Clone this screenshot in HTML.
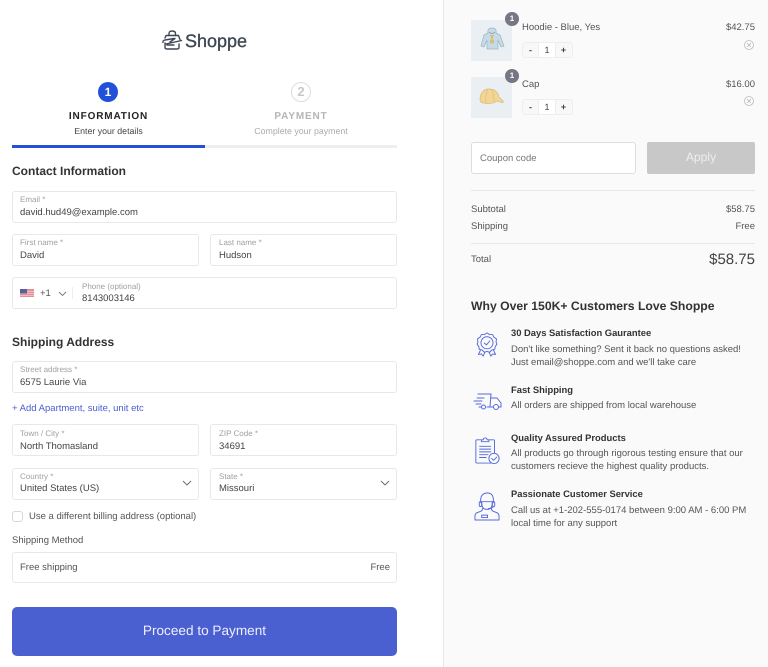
<!DOCTYPE html>
<html><head><meta charset="utf-8"><style>
html,body{margin:0;padding:0;background:#fff}
#p{position:relative;width:768px;height:667px;overflow:hidden;background:#fff;font-family:"Liberation Sans",sans-serif;color:#444;text-rendering:geometricPrecision;filter:blur(.3px)}
#r{position:absolute;left:443px;top:0;width:325px;height:667px;background:#fafafa;border-left:1px solid #e8e8e8;box-sizing:border-box}
.t{position:absolute;white-space:nowrap;line-height:14px}
.b{position:absolute;box-sizing:border-box;border:1px solid #e8e8e8;border-radius:3px;background:#fff}
.l{font-size:8px;color:#a0a0a0;margin-top:1px}
.v{font-size:9.5px;color:#444;margin-top:1px}
.h{font-size:12px;font-weight:bold;color:#333}
.s{font-size:9.5px;color:#555;margin-top:1px}
.f{font-size:9.4px;font-weight:bold;color:#333}
.q{position:absolute;left:522px;width:51px;height:16px;box-sizing:border-box;border:1px solid #eee;border-radius:3px;background:#f8f8f8}
.q i{position:absolute;left:15px;top:0;height:14px;width:16px;background:#fff;border-left:1px solid #eee;border-right:1px solid #eee;font:normal 9px/14px "Liberation Sans",sans-serif;text-align:center;color:#444}
.q b{position:absolute;top:0;width:15px;font:bold 9px/14px "Liberation Sans",sans-serif;text-align:center;color:#444}
.img{position:absolute;left:471px;width:41px;height:41px;background:#e9eff3}
.bd{position:absolute;left:505px;width:14px;height:14px;border-radius:50%;background:#767684;color:#fff;font:bold 8px/14px "Liberation Sans",sans-serif;text-align:center}
svg{position:absolute;overflow:visible}
</style></head><body><div id="p">
<div id="r"></div>

<svg style="left:162px;top:30px" width="21" height="20" viewBox="0 0 21 20" fill="none" stroke="#3d4753" stroke-width="1.4" stroke-linecap="round" stroke-linejoin="round"><path d="M3 8 L4 5.5 H16.5 L18 9.5 M3 13 V17.5 Q3 19 5 19 H15 Q17 19 17 17.5 V14"/><path d="M7 5.5 V3.5 Q7 1 10 1 Q13.5 1 13.5 3.5 V5.5"/><path d="M1 12.5 Q0.5 10.5 3 10 L12 8.5 M4 14 L19.5 10.5 M8 12 L13 8.5 M5 15 H12"/></svg>
<div class="t" style="left:185px;top:30px;line-height:23px;font-size:18px;color:#3d4753;-webkit-text-stroke:.35px #3d4753">Shoppe</div>

<div style="position:absolute;left:98px;top:82px;width:20px;height:20px;border-radius:50%;background:#2350d9;color:#fff;font:bold 12px/20px 'Liberation Sans',sans-serif;text-align:center">1</div>
<div style="position:absolute;left:291px;top:82px;width:20px;height:20px;box-sizing:border-box;border:1px solid #ddd;border-radius:50%;background:#fff;color:#c8c8c8;font:bold 13px/18px 'Liberation Sans',sans-serif;text-align:center">2</div>
<div class="t" style="left:12px;width:193px;top:108px;margin-top:1.5px;text-align:center;font-size:10px;font-weight:bold;color:#222;letter-spacing:.85px">INFORMATION</div>
<div class="t" style="left:205px;width:192px;top:108px;margin-top:1.5px;text-align:center;font-size:10px;font-weight:bold;color:#b5b5b5;letter-spacing:.85px">PAYMENT</div>
<div class="t" style="left:12px;width:193px;top:124px;text-align:center;font-size:8.8px;color:#444">Enter your details</div>
<div class="t" style="left:205px;width:192px;top:124px;text-align:center;font-size:8.8px;color:#aaa">Complete your payment</div>
<div style="position:absolute;left:12px;top:145px;width:193px;height:3px;background:#2350d9"></div>
<div style="position:absolute;left:205px;top:145px;width:192px;height:3px;background:#eee"></div>

<div class="t h" style="left:12px;top:164px">Contact Information</div>
<div class="b" style="left:12px;top:191px;width:385px;height:32px"></div>
<div class="t l" style="left:20px;top:192px">Email *</div><div class="t v" style="left:20px;top:205px">david.hud49@example.com</div>
<div class="b" style="left:12px;top:234px;width:187px;height:32px"></div>
<div class="t l" style="left:20px;top:235px">First name *</div><div class="t v" style="left:20px;top:248px">David</div>
<div class="b" style="left:210px;top:234px;width:187px;height:32px"></div>
<div class="t l" style="left:219px;top:235px">Last name *</div><div class="t v" style="left:219px;top:248px">Hudson</div>
<div class="b" style="left:12px;top:277px;width:385px;height:32px"></div>
<svg style="left:20px;top:289px" width="14" height="8" viewBox="0 0 14 8"><rect width="14" height="8" fill="#e38f99"/><rect y="2" width="14" height="1" fill="#eebcc2"/><rect y="4" width="14" height="1" fill="#eebcc2"/><rect y="6" width="14" height="1" fill="#eebcc2"/><rect width="7" height="4.5" fill="#5b5f95"/></svg>
<div class="t s" style="left:40px;top:286px">+1</div>
<svg style="left:58px;top:291px" width="9" height="6" viewBox="0 0 9 6" fill="none" stroke="#777" stroke-width=".9"><path d="M1 1 L4.5 4.5 L8 1"/></svg>
<div style="position:absolute;left:72px;top:287px;width:1px;height:12px;background:#eee"></div>
<div class="t l" style="left:82px;top:279px">Phone (optional)</div><div class="t v" style="left:82px;top:291px">8143003146</div>

<div class="t h" style="left:12px;top:335px">Shipping Address</div>
<div class="b" style="left:12px;top:361px;width:385px;height:32px"></div>
<div class="t l" style="left:20px;top:362px">Street address *</div><div class="t v" style="left:20px;top:375px">6575 Laurie Via</div>
<div class="t s" style="left:12px;top:401px;color:#4a5fd0">+ Add Apartment, suite, unit etc</div>
<div class="b" style="left:12px;top:424px;width:187px;height:32px"></div>
<div class="t l" style="left:20px;top:426px">Town / City *</div><div class="t v" style="left:20px;top:439px">North Thomasland</div>
<div class="b" style="left:210px;top:424px;width:187px;height:32px"></div>
<div class="t l" style="left:219px;top:426px">ZIP Code *</div><div class="t v" style="left:219px;top:439px">34691</div>
<div class="b" style="left:12px;top:468px;width:187px;height:32px"></div>
<div class="t l" style="left:20px;top:469px">Country *</div><div class="t v" style="left:20px;top:481px">United States (US)</div>
<svg style="left:182px;top:480px" width="10" height="7" viewBox="0 0 10 7" fill="none" stroke="#666" stroke-width=".9"><path d="M1 1 L5 5 L9 1"/></svg>
<div class="b" style="left:210px;top:468px;width:187px;height:32px"></div>
<div class="t l" style="left:219px;top:469px">State *</div><div class="t v" style="left:219px;top:481px">Missouri</div>
<svg style="left:380px;top:480px" width="10" height="7" viewBox="0 0 10 7" fill="none" stroke="#666" stroke-width=".9"><path d="M1 1 L5 5 L9 1"/></svg>

<div class="b" style="left:12px;top:511px;width:11px;height:11px;border-color:#d8d8d8"></div>
<div class="t s" style="left:29px;top:509px">Use a different billing address (optional)</div>
<div class="t s" style="left:12px;top:533px">Shipping Method</div>
<div class="b" style="left:12px;top:552px;width:385px;height:31px"></div>
<div class="t s" style="left:20px;top:560px">Free shipping</div>
<div class="t s" style="right:378px;top:560px">Free</div>
<div style="position:absolute;left:12px;top:607px;width:385px;height:49px;background:#4a5fd0;border-radius:5px;color:#eef;font-size:13.6px;line-height:48px;text-align:center">Proceed to Payment</div>

<!-- cart -->
<div class="img" style="top:20px"></div>
<svg style="left:471px;top:20px" width="41" height="41" viewBox="0 0 41 41"><path d="M17 13 Q16 8 21 8 Q26 8 25 13 L29 15 L33 26 L30 27 L27 20 V29 H16 V20 L13 27 L10 26 L13 15 Z" fill="#c6dbe5" stroke="#9ab5c2" stroke-width=".7"/><path d="M18 12 Q21 15 24 12" stroke="#7d99a8" fill="none" stroke-width=".8"/><path d="M19.5 15 L21 19 L22.5 15 M19.5 20 H22.5 V23 H19.5 Z" stroke="#d8ac60" fill="#e4c27c" stroke-width=".6"/></svg>
<div class="bd" style="top:12px">1</div>
<div class="t s" style="left:522px;top:20px">Hoodie - Blue, Yes</div>
<div class="q" style="top:42px"><b style="left:0">-</b><i>1</i><b style="left:33px">+</b></div>
<div class="t s" style="right:13px;top:20px">$42.75</div>
<svg style="left:744px;top:40px" width="10" height="10" viewBox="0 0 10 10" fill="none" stroke="#bbb" stroke-width=".8"><circle cx="5" cy="5" r="4.5"/><path d="M3.2 3.2 L6.8 6.8 M6.8 3.2 L3.2 6.8"/></svg>

<div class="img" style="top:77px"></div>
<svg style="left:471px;top:77px" width="41" height="41" viewBox="0 0 41 41"><path d="M9 22 Q10 12 18 12 Q26 12 28 20 L32 24 Q33 26 31 25.5 L26 24 Q20 28 13 26 Q9 26 9 22 Z" fill="#f3d596" stroke="#dcb878" stroke-width=".7"/><path d="M17 12 Q14 18 15 26 M21 13 Q23 18 23 26" stroke="#dcb878" fill="none" stroke-width=".6"/></svg>
<div class="bd" style="top:69px">1</div>
<div class="t s" style="left:522px;top:77px">Cap</div>
<div class="q" style="top:99px"><b style="left:0">-</b><i>1</i><b style="left:33px">+</b></div>
<div class="t s" style="right:13px;top:77px">$16.00</div>
<svg style="left:744px;top:96px" width="10" height="10" viewBox="0 0 10 10" fill="none" stroke="#bbb" stroke-width=".8"><circle cx="5" cy="5" r="4.5"/><path d="M3.2 3.2 L6.8 6.8 M6.8 3.2 L3.2 6.8"/></svg>

<div class="b" style="left:471px;top:142px;width:165px;height:32px;border-color:#ddd"></div>
<div class="t s" style="left:480px;top:151px;color:#777">Coupon code</div>
<div style="position:absolute;left:647px;top:142px;width:108px;height:32px;background:#c8c8c8;border-radius:2px;color:#eee;font-size:12.1px;line-height:31px;text-align:center">Apply</div>
<div style="position:absolute;left:471px;top:190px;width:284px;height:1px;background:#e8e8e8"></div>
<div class="t s" style="left:471px;top:202px">Subtotal</div><div class="t s" style="right:13px;top:202px">$58.75</div>
<div class="t s" style="left:471px;top:219px">Shipping</div><div class="t s" style="right:13px;top:219px">Free</div>
<div style="position:absolute;left:471px;top:243px;width:284px;height:1px;background:#e8e8e8"></div>
<div class="t s" style="left:471px;top:252px">Total</div>
<div class="t" style="right:13px;top:252px;margin-top:1px;font-size:15px;color:#444">$58.75</div>

<div class="t" style="left:471px;top:299px;font-size:12.2px;font-weight:bold;color:#333">Why Over 150K+ Customers Love Shoppe</div>

<svg style="left:476px;top:332px" width="22" height="25" viewBox="0 0 25 29" fill="none" stroke="#5468dc" stroke-width="1.1" stroke-linejoin="round"><path d="M12.5 1 L15.5 3 L19 3 L20.5 6 L23.5 8 L23 11.5 L24 14 L22 17 L21.5 20 L18 21 L15.5 23.5 L12.5 22.5 L9.5 23.5 L7 21 L3.5 20 L3 17 L1 14 L2 11.5 L1.5 8 L4.5 6 L6 3 L9.5 3 Z"/><circle cx="12.5" cy="12.5" r="7"/><path d="M9 12.5 L11.8 15 L16 10"/><path d="M5 21 L2.5 26 L6 25.5 L8 28 L10 23.5 M20 21 L22.5 26 L19 25.5 L17 28 L15 23.5"/></svg>
<div class="t f" style="left:511px;top:326px">30 Days Satisfaction Gaurantee</div>
<div class="t s" style="left:511px;top:342px">Don't like something? Sent it back no questions asked!</div>
<div class="t s" style="left:511px;top:355px">Just email@shoppe.com and we'll take care</div>

<svg style="left:473px;top:393px" width="30" height="17" viewBox="0 0 30 17" fill="none" stroke="#5468dc" stroke-width="1" stroke-linecap="round" stroke-linejoin="round"><path d="M5 1 H18 L17 14 H14 M8 14 H6 M4 5 H11 M1 8 H9 M3 11 H8"/><path d="M18 5 H24 L28 10 V14 H25.5 M20 14 H17"/><circle cx="10.5" cy="14" r="2"/><circle cx="23" cy="14" r="2.5"/></svg>
<div class="t f" style="left:511px;top:383px">Fast Shipping</div>
<div class="t s" style="left:511px;top:398px">All orders are shipped from local warehouse</div>

<svg style="left:474px;top:437px" width="27" height="27" viewBox="0 0 27 29" fill="none" stroke="#5468dc" stroke-width="1" stroke-linecap="round" stroke-linejoin="round"><path d="M7 3 H2 Q1 3 1 4 V27 Q1 28 2 28 H17 M21 17 V4 Q21 3 20 3 H15"/><path d="M7 5 V3 H9 Q9 1 11 1 Q13 1 13 3 H15 V5 Z"/><path d="M5 10 H17 M5 13 H17 M5 16 H17 M5 19 H14 M5 22 H12"/><circle cx="20.5" cy="23" r="5.5"/><path d="M18 23 L20 25 L23.5 21.5"/></svg>
<div class="t f" style="left:511px;top:431px">Quality Assured Products</div>
<div class="t s" style="left:511px;top:446px">All products go through rigorous testing ensure that our</div>
<div class="t s" style="left:511px;top:459px">customers recieve the highest quality products.</div>

<svg style="left:474px;top:492px" width="26" height="29" viewBox="0 0 27 30" fill="none" stroke="#5468dc" stroke-width="1" stroke-linecap="round" stroke-linejoin="round"><path d="M7 11 Q6 1 14 1 Q21 1 20 11"/><path d="M7 10 H20 M8 11 Q8 18 13.5 18 Q19 18 19 11"/><rect x="5.5" y="10" width="2.5" height="5" rx="1"/><rect x="19" y="10" width="2.5" height="5" rx="1"/><path d="M20 15 Q20 17 15 17"/><path d="M9 17 Q9 19 7 20 L3 21.5 Q1 22.5 1 25 V29 H26 V25 Q26 22.5 24 21.5 L20 20 Q18 19 18 17"/><rect x="8" y="24" width="6" height="2.5"/></svg>
<div class="t f" style="left:511px;top:487px">Passionate Customer Service</div>
<div class="t s" style="left:511px;top:503px">Call us at +1-202-555-0174 between 9:00 AM - 6:00 PM</div>
<div class="t s" style="left:511px;top:516px">local time for any support</div>
</div></body></html>
